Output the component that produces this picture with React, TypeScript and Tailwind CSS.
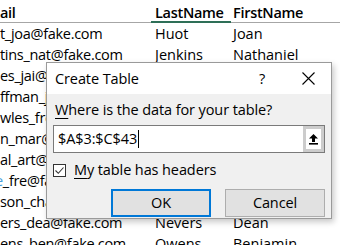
import React from "react";

const rows: { email: React.ReactNode; last: string; first: string }[] = [
  { email: "t_joa@fake.com", last: "Huot", first: "Joan" },
  { email: "tins_nat@fake.com", last: "Jenkins", first: "Nathaniel" },
  { email: "es_jai@fake.com", last: "Hughes", first: "Jaime" },
  { email: "ffman_jim@fake.com", last: "Hoffman", first: "Jim" },
  { email: "wles_fre@fake.com", last: "Knowles", first: "Fred" },
  { email: "n_mar@fake.com", last: "Martin", first: "Mary" },
  { email: "al_art@fake.com", last: "Neal", first: "Art" },
  {
    email: (
      <>
        <span className="ml-[-5px] text-[#4aa0dc]">e</span>_fre@fake.com
      </>
    ),
    last: "Frey",
    first: "Fred",
  },
  { email: "son_cha@fake.com", last: "Carlson", first: "Charles" },
  { email: "ers_dea@fake.com", last: "Nevers", first: "Dean" },
  { email: "ens_ben@fake.com", last: "Owens", first: "Benjamin" },
];

export default function App() {
  return (
    <div
      className="relative w-[340px] h-[245px] overflow-hidden bg-white text-[#000] text-[14.5px]"
      style={{ fontFamily: '"Open Sans", "Noto Sans", sans-serif' }}
    >
      {/* Sheet */}
      <div className="flex flex-col">
        <div className="flex h-[23px] pt-[3px] items-center font-semibold tracking-[-0.3px] border-b border-[#a6a6a6]">
          <div className="w-[151px] whitespace-nowrap">ail</div>
          <div className="w-[80px] h-full flex items-center pl-[4px] border-b-2 border-[#2e6f57] mb-[-2px]">LastName</div>
          <div className="pl-[2px]">FirstName</div>
        </div>
        {rows.map((r, i) => (
          <div key={i} className="flex h-[21px] items-center whitespace-nowrap">
            <div className="w-[151px] overflow-hidden tracking-[-0.3px]">{r.email}</div>
            <div className="w-[80px] pl-[4px]">{r.last}</div>
            <div className="pl-[2px]">{r.first}</div>
          </div>
        ))}
      </div>

      {/* Dialog */}
      <div className="absolute left-[46px] top-[62px] w-[286px] h-[157px] flex flex-col border border-[#9a9a9a] bg-[#f0f0f0] shadow-[2px_3px_6px_rgba(0,0,0,0.22)] tracking-[-0.1px]">
        <div className="h-[31px] bg-white flex items-center">
          <div className="flex-1 pl-[8px] pt-[1px]">Create Table</div>
          <div className="w-[46px] h-full flex items-center justify-center">?</div>
          <div className="w-[46px] h-full flex items-center justify-center">
            <svg width="13" height="13" viewBox="0 0 13 13">
              <path d="M0.5 0.5 L12.5 12.5 M12.5 0.5 L0.5 12.5" stroke="#000" strokeWidth="1.1" fill="none" />
            </svg>
          </div>
        </div>
        <div className="flex-1 flex flex-col px-[6px]">
          <div className="h-[20px] mt-[6px] flex items-center pl-[2px] whitespace-nowrap">
            <span>
              <u className="underline-offset-[3px]">W</u>here is the data for your table?
            </span>
          </div>
          <div className="mt-[5px] h-[28px] flex border border-[#7a7a7a] bg-white">
            <div className="flex-1 flex items-center pl-[4px]">
              <span>$A$3:$C$43</span>
              <span className="w-[1px] h-[18px] bg-black ml-[1px]"></span>
            </div>
            <div className="w-[21px] h-full bg-[#cccccc] p-[3px] flex">
              <div className="flex-1 bg-white flex items-center justify-center">
                <svg width="9" height="11" viewBox="0 0 9 11">
                  <path d="M4.5 0 L9 4.5 H6 V8 H3 V4.5 H0 Z" fill="#000" />
                  <rect x="0" y="9" width="9" height="1.6" fill="#000" />
                </svg>
              </div>
            </div>
          </div>
          <div className="mt-[7px] h-[20px] flex items-center">
            <div className="w-[13px] h-[13px] border border-[#333] bg-white flex items-center justify-center">
              <svg width="11" height="11" viewBox="0 0 11 11">
                <path d="M1.5 5.5 L4.3 8.3 L9.5 2.5" stroke="#333" strokeWidth="1.1" fill="none" />
              </svg>
            </div>
            <span className="ml-[8px] whitespace-nowrap">
              <u className="underline-offset-[3px]">M</u>y table has headers
            </span>
          </div>
          <div className="mt-[9px] flex justify-end gap-[14px]">
            <div className="w-[100px] h-[28px] flex items-center justify-center bg-[#e1e1e1] border-2 border-[#0078d7]">OK</div>
            <div className="w-[100px] h-[28px] flex items-center justify-center bg-[#e1e1e1] border border-[#adadad]">Cancel</div>
          </div>
        </div>
      </div>
    </div>
  );
}
